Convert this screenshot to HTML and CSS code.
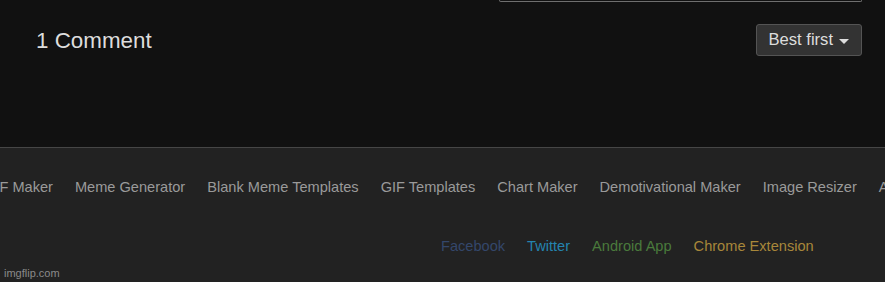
FILE: index.html
```html
<!DOCTYPE html>
<html lang="en">
<head>
    <meta charset="UTF-8">
    <meta name="viewport" content="width=device-width, initial-scale=1.0">
    <title>Comments</title>
    <link rel="stylesheet" href="styles.css">
</head>
<body>
    <section class="comments">
        <div class="reply-box"></div>
        <div class="comments-head">
            <h2 class="comments-count">1 Comment</h2>
            <button class="sort-btn">Best first <span class="caret"></span></button>
        </div>
    </section>

    <footer>
        <nav class="footer-nav">
            <a href="#">GIF Maker</a>
            <a href="#">Meme Generator</a>
            <a href="#">Blank Meme Templates</a>
            <a href="#">GIF Templates</a>
            <a href="#">Chart Maker</a>
            <a href="#">Demotivational Maker</a>
            <a href="#">Image Resizer</a>
            <a href="#">About</a>
            <a href="#">Privacy</a>
        </nav>
        <div class="social">
            <a href="#" class="fb">Facebook</a>
            <a href="#" class="tw">Twitter</a>
            <a href="#" class="android">Android App</a>
            <a href="#" class="chrome">Chrome Extension</a>
        </div>
        <div class="site-name">imgflip.com</div>
    </footer>
</body>
</html>
```

FILE: styles.css
```css
body {
    margin: 0;
    font-family: "Liberation Sans", Arial, sans-serif;
    background-color: #111;
    overflow: hidden;
}
.comments {
    height: 147px;
    padding: 0 23px 0 36px;
    box-sizing: border-box;
}
.reply-box {
    width: 361px;
    height: 1px;
    margin-left: auto;
    border: 1px solid #6f6f6f;
    border-top: none;
    border-radius: 0 0 3px 3px;
}
.comments-head {
    display: flex;
    justify-content: space-between;
    align-items: center;
    margin-top: 22px;
}
.comments-count {
    margin: 0;
    padding-top: 1px;
    font-size: 22.4px;
    font-weight: normal;
    color: #ddd;
}
.sort-btn {
    display: flex;
    align-items: center;
    gap: 6px;
    height: 32px;
    padding: 0 12px 0 11px;
    background-color: #333;
    color: #ddd;
    border: 1px solid #545454;
    border-radius: 3px;
    font-family: inherit;
    font-size: 16.6px;
    cursor: pointer;
}
.caret {
    width: 0;
    height: 0;
    margin-top: 2px;
    border-left: 5px solid transparent;
    border-right: 5px solid transparent;
    border-top: 5px solid #ddd;
}
footer {
    background-color: #222;
    border-top: 1px solid #464646;
    height: 135px;
}
footer a {
    text-decoration: none;
}
.footer-nav {
    display: flex;
    gap: 22px;
    white-space: nowrap;
    margin-left: -16px;
    padding-top: 31px;
    font-size: 14.6px;
}
.footer-nav a {
    color: #9a9a9a;
}
.social {
    display: flex;
    gap: 22px;
    padding: 43px 0 0 441px;
    font-size: 14.6px;
}
.social .fb {
    color: #34476b;
}
.social .tw {
    color: #2484b0;
}
.social .android {
    color: #4a7a3c;
}
.social .chrome {
    color: #a8873a;
}
.site-name {
    padding: 13px 0 0 4px;
    font-size: 11px;
    color: #8a8a8a;
}
```
